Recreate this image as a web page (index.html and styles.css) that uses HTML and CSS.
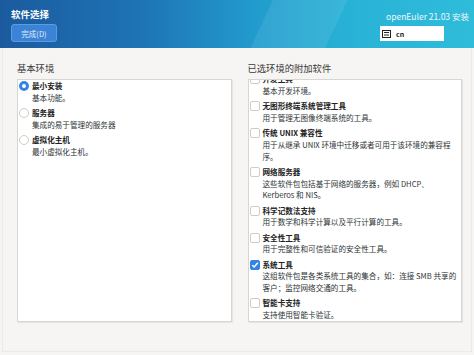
FILE: index.html
```html
<!DOCTYPE html>
<html lang="zh-CN">
<head>
    <meta charset="UTF-8">
    <meta name="viewport" content="width=device-width, initial-scale=1.0">
    <title>软件选择</title>
    <link rel="stylesheet" href="styles.css">
</head>
<body>
    <header class="header">
        <div class="header-left">
            <h1 class="page-title">软件选择</h1>
            <button class="done-button">完成(<u>D</u>)</button>
        </div>
        <div class="header-right">
            <div class="product">openEuler 21.03 安装</div>
            <div class="keyboard">
                <svg class="keyboard-icon" width="9" height="8" viewBox="0 0 9 8">
                    <rect x="0.5" y="0.5" width="8" height="7" fill="none" stroke="#222" stroke-width="1"/>
                    <rect x="2" y="2" width="5" height="1" fill="#222"/>
                    <rect x="2" y="4.5" width="5" height="1" fill="#222"/>
                </svg>
                <span>cn</span>
            </div>
        </div>
    </header>

    <main class="content">
        <section class="column">
            <h2 class="column-title">基本环境</h2>
            <div class="list-box">
                <div class="list">
                    <div class="item">
                        <span class="radio checked"></span>
                        <div class="item-text">
                            <div class="item-name">最小安装</div>
                            <div class="item-desc">基本功能。</div>
                        </div>
                    </div>
                    <div class="item">
                        <span class="radio"></span>
                        <div class="item-text">
                            <div class="item-name">服务器</div>
                            <div class="item-desc">集成的易于管理的服务器</div>
                        </div>
                    </div>
                    <div class="item">
                        <span class="radio"></span>
                        <div class="item-text">
                            <div class="item-name">虚拟化主机</div>
                            <div class="item-desc">最小虚拟化主机。</div>
                        </div>
                    </div>
                </div>
            </div>
        </section>

        <section class="column">
            <h2 class="column-title">已选环境的附加软件</h2>
            <div class="list-box">
                <div class="list scrolled">
                    <div class="item">
                        <span class="check"></span>
                        <div class="item-text">
                            <div class="item-name">开发工具</div>
                            <div class="item-desc">基本开发环境。</div>
                        </div>
                    </div>
                    <div class="item">
                        <span class="check"></span>
                        <div class="item-text">
                            <div class="item-name">无图形终端系统管理工具</div>
                            <div class="item-desc">用于管理无图像终端系统的工具。</div>
                        </div>
                    </div>
                    <div class="item">
                        <span class="check"></span>
                        <div class="item-text">
                            <div class="item-name">传统 UNIX 兼容性</div>
                            <div class="item-desc">用于从继承 UNIX 环境中迁移或者可用于该环境的兼容程<br>序。</div>
                        </div>
                    </div>
                    <div class="item">
                        <span class="check"></span>
                        <div class="item-text">
                            <div class="item-name">网络服务器</div>
                            <div class="item-desc">这些软件包包括基于网络的服务器，例如 DHCP、<br>Kerberos 和 NIS。</div>
                        </div>
                    </div>
                    <div class="item">
                        <span class="check"></span>
                        <div class="item-text">
                            <div class="item-name">科学记数法支持</div>
                            <div class="item-desc">用于数学和科学计算以及平行计算的工具。</div>
                        </div>
                    </div>
                    <div class="item">
                        <span class="check"></span>
                        <div class="item-text">
                            <div class="item-name">安全性工具</div>
                            <div class="item-desc">用于完整性和可信验证的安全性工具。</div>
                        </div>
                    </div>
                    <div class="item">
                        <span class="check checked">
                            <svg width="8" height="8" viewBox="0 0 8 8">
                                <path d="M1.3 4.2 L3.2 6 L6.8 1.8" fill="none" stroke="#fff" stroke-width="1.5"/>
                            </svg>
                        </span>
                        <div class="item-text">
                            <div class="item-name">系统工具</div>
                            <div class="item-desc">这组软件包是各类系统工具的集合，如：连接 SMB 共享的<br>客户；监控网络交通的工具。</div>
                        </div>
                    </div>
                    <div class="item">
                        <span class="check"></span>
                        <div class="item-text">
                            <div class="item-name">智能卡支持</div>
                            <div class="item-desc">支持使用智能卡验证。</div>
                        </div>
                    </div>
                </div>
            </div>
        </section>
    </main>
</body>
</html>
```

FILE: styles.css
```css
body {
    margin: 0;
    font-family: "Noto Sans CJK SC", "Noto Sans", sans-serif;
    background-color: #f6f5f4;
    color: #2e3436;
    width: 474px;
    height: 355px;
    overflow: hidden;
}

.header {
    height: 48px;
    display: flex;
    justify-content: space-between;
    padding: 0 5px 0 11px;
    background:
        linear-gradient(115deg, rgba(255, 255, 255, 0) 55%, rgba(255, 255, 255, 0.08) 55%, rgba(255, 255, 255, 0.08) 70%, rgba(255, 255, 255, 0) 70%),
        linear-gradient(to right, #1b5a9e 0%, #1e74b6 30%, #229dce 55%, #29b3d7 75%, #2fbcda 100%);
    color: white;
}

.header-left {
    display: flex;
    flex-direction: column;
    align-items: flex-start;
}

.page-title {
    margin: 0;
    padding-top: 7px;
    font-size: 9.5px;
    line-height: 14px;
    font-weight: bold;
}

.done-button {
    margin-top: 3px;
    width: 46px;
    height: 18px;
    padding: 0;
    border: 1px solid #5b9be0;
    border-radius: 3px;
    background-color: #3a83d6;
    color: #e3eefa;
    font-family: inherit;
    font-size: 7.5px;
}

.done-button u {
    text-decoration: none;
}

.header-right {
    display: flex;
    flex-direction: column;
    align-items: flex-end;
}

.product {
    padding-top: 10px;
    font-size: 8.5px;
    line-height: 12px;
    color: #eef8fc;
}

.keyboard {
    margin-top: 4px;
    margin-right: 25px;
    width: 64px;
    height: 15px;
    display: flex;
    align-items: center;
    gap: 5px;
    padding-left: 2px;
    box-sizing: border-box;
    background-color: white;
    color: #222;
    font-size: 7px;
    font-weight: bold;
}

.content {
    display: flex;
    gap: 16px;
    padding: 0 9px 0 14px;
    margin: 0 2px;
    height: 304px;
    border: 1px solid #ebeae8;
    border-top: none;
    box-sizing: border-box;
}

.column {
    flex: 1;
    display: flex;
    flex-direction: column;
}

.column-title {
    margin: 0;
    padding-top: 13px;
    height: 31px;
    box-sizing: border-box;
    font-size: 9.3px;
    line-height: 14px;
    font-weight: normal;
    color: #3a3a3a;
}

.list-box {
    height: 243px;
    background-color: white;
    border: 1px solid #d8d6d3;
    box-shadow: 1px 1px 1px rgba(0, 0, 0, 0.06);
    overflow: hidden;
    box-sizing: border-box;
}

.list.scrolled {
    margin-top: -7px;
}

.item {
    display: flex;
    align-items: flex-start;
    gap: 3px;
    padding-left: 1px;
    padding-bottom: 3.5px;
}

.item-text {
    font-size: 7.6px;
    line-height: 11.75px;
}

.item-name {
    font-weight: bold;
    color: #222;
}

.item-desc {
    color: #2e3436;
}

.radio {
    flex: none;
    width: 10px;
    height: 10px;
    margin-top: 1px;
    box-sizing: border-box;
    border: 1px solid #cfcdca;
    border-radius: 50%;
    background-color: white;
}

.radio.checked {
    border: 3px solid #3584e4;
}

.check {
    flex: none;
    width: 10px;
    height: 10px;
    margin-top: 1px;
    box-sizing: border-box;
    border: 1px solid #cfcdca;
    border-radius: 2px;
    background-color: white;
    display: flex;
    align-items: center;
    justify-content: center;
}

.check.checked {
    border-color: #3584e4;
    background-color: #3584e4;
}
```
